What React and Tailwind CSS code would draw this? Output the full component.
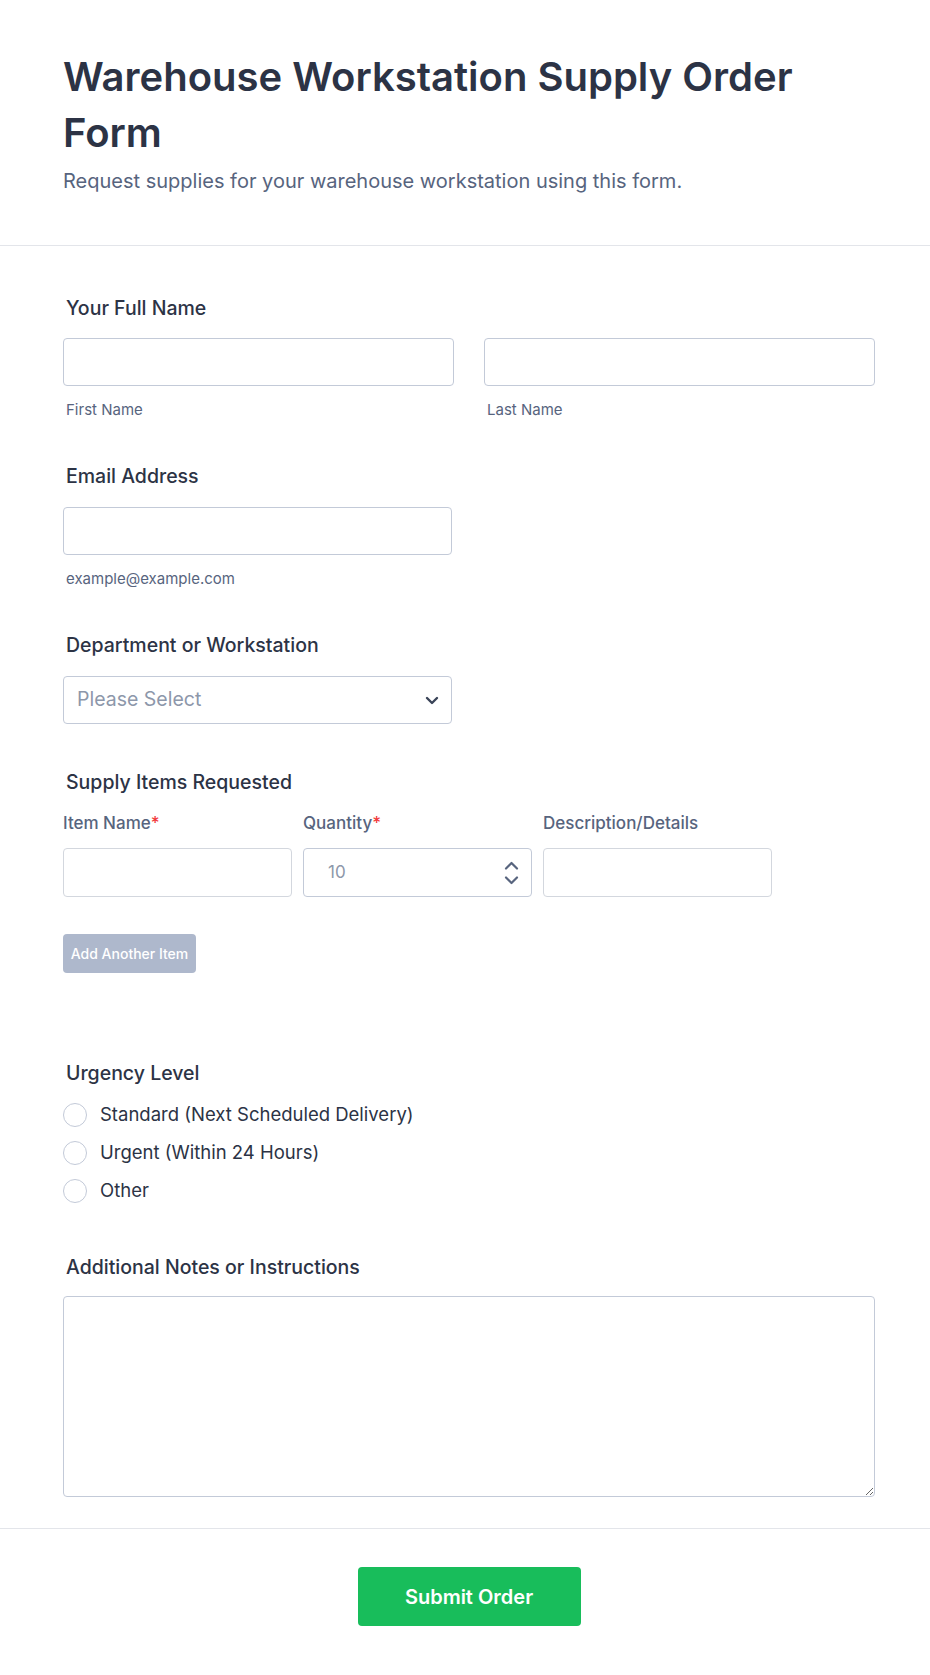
import React from "react";

function Label({ children, className = "" }) {
  return (
    <div className={`text-[19.5px] leading-6 font-medium text-[#2c3345] ${className}`}>
      {children}
    </div>
  );
}

function SubLabel({ children, className = "" }) {
  return (
    <div className={`text-[15px] leading-5 text-[#57647e] ${className}`}>{children}</div>
  );
}

const inputCls =
  "block h-12 rounded-[4px] border border-[#c3cad8] bg-white px-3 text-[16px] text-[#2c3345] outline-none";

function Radio({ label }) {
  return (
    <label className="flex h-[38px] items-center gap-[13px]">
      <span className="h-6 w-6 rounded-full border border-[#c3cad8] bg-white" />
      <span className="text-[18.5px] text-[#2c3345]">{label}</span>
    </label>
  );
}

export default function App() {
  return (
    <div className="min-h-screen bg-white font-['Inter','Noto_Sans',sans-serif]">
      {/* header */}
      <header className="border-b border-[#e3e5ea] pl-[63px] pr-[55px] pt-[49px] pb-[52px]">
        <h1 className="max-w-[800px] text-[40px] leading-[56px] font-semibold text-[#2c3345]">
          Warehouse Workstation Supply Order Form
        </h1>
        <p className="mt-2 text-[20px] leading-6 text-[#57647e]">
          Request supplies for your warehouse workstation using this form.
        </p>
      </header>

      <main className="pl-[63px] pr-[55px] pt-[50px] pb-[31px]">
        {/* name */}
        <Label className="pl-[3px]">Your Full Name</Label>
        <div className="mt-[18px] grid grid-cols-2 gap-[30px]">
          <div>
            <input className={`${inputCls} w-full`} />
            <SubLabel className="mt-[14px] pl-[3px]">First Name</SubLabel>
          </div>
          <div>
            <input className={`${inputCls} w-full`} />
            <SubLabel className="mt-[14px] pl-[3px]">Last Name</SubLabel>
          </div>
        </div>

        {/* email */}
        <Label className="mt-[44px] pl-[3px]">Email Address</Label>
        <input className={`${inputCls} mt-[19px] w-[389px]`} />
        <SubLabel className="mt-[14px] pl-[3px]">example@example.com</SubLabel>

        {/* department */}
        <Label className="mt-[44px] pl-[3px]">Department or Workstation</Label>
        <div className="mt-[19px] flex h-12 w-[389px] items-center justify-between rounded-[4px] border border-[#c3cad8] pl-[13px] pr-[12px]">
          <span className="text-[19.5px] text-[#8d97aa]">Please Select</span>
          <svg width="14" height="9" viewBox="0 0 14 9" fill="none">
            <path d="M2 2l5 5 5-5" stroke="#3a4458" strokeWidth="2.4" strokeLinecap="round" strokeLinejoin="round" />
          </svg>
        </div>

        {/* supply items */}
        <Label className="mt-[46px] pl-[3px]">Supply Items Requested</Label>
        <div className="mt-[19px] flex gap-[11px]">
          <div className="w-[229px]">
            <div className="text-[17px] leading-5 font-medium text-[#57647e]">
              Item Name<span className="text-[#f23a3c]">*</span>
            </div>
            <input className="mt-[15px] block h-[49px] w-full rounded-[4px] border border-[#d3d7de] bg-white px-3 outline-none" />
          </div>
          <div className="w-[229px]">
            <div className="text-[17px] leading-5 font-medium text-[#57647e]">
              Quantity<span className="text-[#f23a3c]">*</span>
            </div>
            <div className="mt-[15px] flex h-[49px] w-full items-center justify-between rounded-[4px] border border-[#c3cad8] pl-[24px] pr-[12px]">
              <span className="text-[17px] text-[#8d97aa]">10</span>
              <svg width="15" height="26" viewBox="0 0 15 26" fill="none">
                <path d="M2 8.5l5.5-5.5 5.5 5.5" stroke="#57647e" strokeWidth="2.2" strokeLinecap="round" strokeLinejoin="round" />
                <path d="M2 17.5l5.5 5.5 5.5-5.5" stroke="#57647e" strokeWidth="2.2" strokeLinecap="round" strokeLinejoin="round" />
              </svg>
            </div>
          </div>
          <div className="w-[229px]">
            <div className="text-[17px] leading-5 font-medium text-[#57647e]">
              Description/Details
            </div>
            <input className="mt-[15px] block h-[49px] w-full rounded-[4px] border border-[#d3d7de] bg-white px-3 outline-none" />
          </div>
        </div>

        <button
          type="button"
          className="mt-[37px] flex h-[39px] w-[133px] items-center justify-center rounded-[4px] bg-[#aeb8cc] text-[14px] font-medium text-white"
        >
          Add Another Item
        </button>

        {/* urgency */}
        <Label className="mt-[88px] pl-[3px]">Urgency Level</Label>
        <div className="mt-[11px]">
          <Radio label="Standard (Next Scheduled Delivery)" />
          <Radio label="Urgent (Within 24 Hours)" />
          <Radio label="Other" />
        </div>

        {/* notes */}
        <Label className="mt-[45px] pl-[3px]">Additional Notes or Instructions</Label>
        <textarea className="mt-[17px] block h-[201px] w-full rounded-[4px] border border-[#c3cad8] bg-white p-3 outline-none" />
      </main>

      <footer className="flex justify-center border-t border-[#e3e5ea] pl-[63px] pr-[55px] pt-[38px] pb-[49px]">
        <button
          type="button"
          className="h-[59px] w-[223px] rounded-[4px] bg-[#18bd5b] text-[20px] font-semibold text-white"
        >
          Submit Order
        </button>
      </footer>
    </div>
  );
}
